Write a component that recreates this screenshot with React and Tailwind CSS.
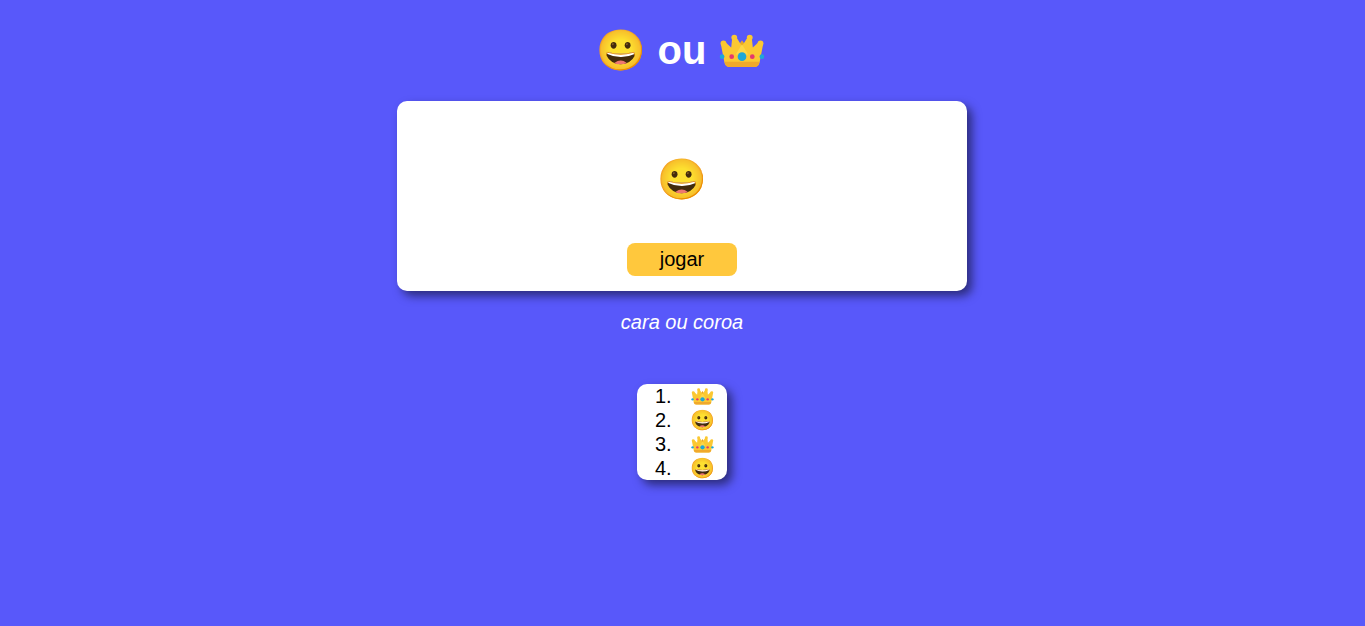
function Crown({ className }) {
  return (
    <svg viewBox="0 0 44 33" className={className}>
      {/* back points */}
      <path d="M15 16 L22 6 L29 16 Z" fill="#e9a825" />
      {/* body */}
      <path
        d="M1.5 10 L6 8 L11.5 13 L12.5 4 L17 4 L22 12 L27 4 L31.5 4 L32.5 13 L38 8 L42.5 10 L39 28 Q38 32 34 32 L10 32 Q6 32 5 28 Z"
        fill="#fbc832"
      />
      <path d="M22 10 L28 20 L16 20 Z" fill="#fdd648" />
      <path d="M5.2 27 L38.8 27 L38.5 29 Q37.5 32 34 32 L10 32 Q6.5 32 5.5 29 Z" fill="#f0a92c" />
      {/* tips */}
      <circle cx="4" cy="9" r="2.8" fill="#fbc832" />
      <circle cx="40" cy="9" r="2.8" fill="#fbc832" />
      <circle cx="14.5" cy="3.5" r="2.8" fill="#fbc832" />
      <circle cx="29.5" cy="3.5" r="2.8" fill="#fbc832" />
      {/* jewels */}
      <circle cx="2.7" cy="22" r="2.3" fill="#1ea7d8" />
      <circle cx="41.3" cy="22" r="2.3" fill="#1ea7d8" />
      <circle cx="12" cy="22" r="2.3" fill="#e5386d" />
      <circle cx="32" cy="22" r="2.3" fill="#e5386d" />
      <circle cx="22" cy="22" r="4.2" fill="#1ea7d8" />
    </svg>
  )
}

export default function App() {
  const results = ['crown', 'face', 'crown', 'face']

  return (
    <div className="min-h-screen bg-[#5858fa] pr-px flex flex-col items-center font-['Liberation_Sans','Noto_Color_Emoji',sans-serif]">
      <h1 className="mt-[21px] h-[58px] flex items-center text-[40px] leading-[58px] font-bold text-white text-center whitespace-pre">
        😀 ou <Crown className="w-[46px] h-[34px] mt-[1px] mx-[2px]" />
      </h1>

      <div className="mt-[22px] w-[570px] h-[190px] bg-white rounded-[10px] shadow-[5px_5px_10px_rgba(0,0,0,0.5)] flex flex-col items-center">
        <div className="mt-[50px] h-[56px] text-[40px] leading-[56px]">😀</div>
        <button className="mt-[36px] w-[110px] h-[33px] bg-[#ffc83d] rounded-[8px] text-xl leading-[33px] text-black">jogar</button>
      </div>

      <p className="mt-[20px] text-xl leading-[23px] italic text-white">cara ou coroa</p>

      <ol className="mt-[50px] w-[90px] h-[96px] bg-white rounded-[10px] shadow-[5px_5px_10px_rgba(0,0,0,0.5)] text-xl leading-[24px] text-black">
        {results.map((r, i) => (
          <li key={i} className="flex items-center h-[24px]">
            <span className="w-[34.6px] text-right">{i + 1}.</span>
            <span className="ml-[18.4px] w-[25px] flex items-center justify-center">
              {r === 'crown' ? <Crown className="w-[23px] h-[17px]" /> : '😀'}
            </span>
          </li>
        ))}
      </ol>
    </div>
  )
}
